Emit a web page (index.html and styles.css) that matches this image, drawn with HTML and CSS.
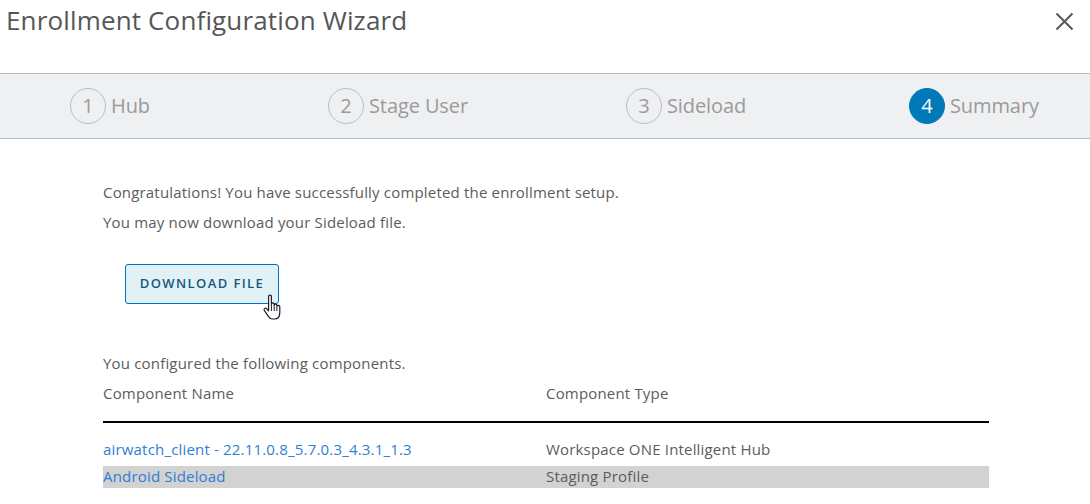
FILE: index.html
```html
<!DOCTYPE html>
<html lang="en">
<head>
<meta charset="utf-8">
<title>Enrollment Configuration Wizard</title>
<link rel="stylesheet" href="styles.css">
</head>
<body>
<div class="wizard">
  <header class="head">
    <h1 class="title">Enrollment Configuration Wizard</h1>
    <svg class="close" width="19" height="19" viewBox="0 0 19 19" aria-label="Close"><path d="M1.5 1.5 L17.5 17.5 M17.5 1.5 L1.5 17.5" stroke="#565656" stroke-width="2" fill="none"/></svg>
  </header>
  <nav class="steps">
    <div class="step"><span class="num">1</span><span class="label">Hub</span></div>
    <div class="step"><span class="num">2</span><span class="label">Stage User</span></div>
    <div class="step"><span class="num">3</span><span class="label">Sideload</span></div>
    <div class="step"><span class="num current">4</span><span class="label">Summary</span></div>
  </nav>
  <main class="body">
    <p class="line first">Congratulations! You have successfully completed the enrollment setup.</p>
    <p class="line second">You may now download your Sideload file.</p>
    <div class="action">
      <button class="download" type="button"><span class="download-text">DOWNLOAD FILE</span></button>
      <svg class="cursor" width="20" height="26" viewBox="0 0 20 26">
        <path d="M5.6 2.4 C5.6 .7 8.4 .7 8.4 2.4 V10 C8.8 8.6 10.9 8.6 11.2 10.1 V11 C11.6 9.8 13.6 9.9 13.9 11.2 V12 C14.4 10.9 16.6 11.1 16.8 12.6 V18.5 C16.8 22.4 14.8 25 11.4 25 H9.6 C7.2 25 6 23.6 5 21.8 L1.3 16.4 C.5 15 2.2 13.6 3.5 14.6 L5.6 16.8 Z" fill="#fff" stroke="#1b1f2a" stroke-width="1.2" stroke-linejoin="round"/>
        <path d="M8.4 10 V17 M11.2 11 V17 M13.9 12 V17" stroke="#1b1f2a" stroke-width="1" fill="none"/>
      </svg>
    </div>
    <p class="line third">You configured the following components.</p>
    <div class="row thead"><span>Component Name</span><span>Component Type</span></div>
    <div class="row item"><a class="link">airwatch_client - 22.11.0.8_5.7.0.3_4.3.1_1.3</a><span>Workspace ONE Intelligent Hub</span></div>
    <div class="row item alt"><a class="link">Android Sideload</a><span>Staging Profile</span></div>
  </main>
</div>
</body>
</html>
```
FILE: styles.css
```css
* { box-sizing: border-box; }
html, body { margin: 0; height: 100%; background: #fff; overflow: hidden; }
body { font-family: "Open Sans", "Liberation Sans", sans-serif; color: #5c5c5c; }
.head { height: 73px; display: flex; justify-content: space-between; align-items: flex-start; padding: 3px 16px 0 6px; }
.title { margin: 0; font-size: 26px; font-weight: 400; line-height: 35px; letter-spacing: .15px; color: #565656; }
.close { margin-top: 9px; }
.steps { height: 66px; background: #eff0f2; border-top: 1px solid #b4bfc8; border-bottom: 1px solid #b4bfc8; display: grid; grid-template-columns: 258px 298px 283px 1fr; padding-left: 70px; align-items: center; }
.step { display: flex; align-items: center; gap: 5px; font-size: 20px; letter-spacing: -.1px; line-height: 24px; color: #9a9a9a; }
.label { position: relative; top: 0; }
.num { width: 36px; height: 36px; border-radius: 50%; border: 1px solid #b4bfc8; display: flex; align-items: center; justify-content: center; font-size: 20px; color: #9a9a9a; }
.num.current { background: #0079b8; border-color: #0079b8; color: #fff; }
.body { padding: 0 101px 0 103px; font-size: 15px; line-height: 20px; letter-spacing: .18px; }
.line { margin: 0; }
.first { padding-top: 43px; }
.second { padding-top: 10px; }
.action { position: relative; margin: 32px 0 0 22px; width: 154px; height: 40px; }
.download { display: flex; align-items: center; justify-content: center; width: 154px; height: 40px; border: 1px solid #0072c6; border-radius: 3px; background: #e1f1f6; color: #17587a; font: 600 13px/18px "Open Sans", sans-serif; letter-spacing: 1.4px; padding: 0 0 2px; }
.cursor { position: absolute; left: 138px; top: 30px; }
.third { padding-top: 49px; }
.row { display: grid; grid-template-columns: 443px 1fr; }
.thead { padding-top: 10px; padding-bottom: 18px; border-bottom: 2px solid #000; }
.item { height: 22px; align-items: center; padding-bottom: 2px; }
.thead + .item { margin-top: 16px; }
.alt { background: #d2d2d2; margin-top: 5px; }
.link { color: #2d7fd3; }
```
